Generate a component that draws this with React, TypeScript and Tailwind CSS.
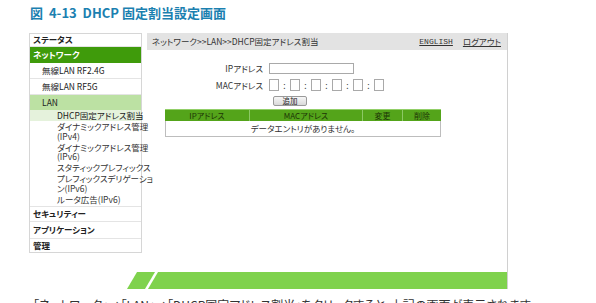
const subItems = [
  ["ダイナミックアドレス管理", "(IPv4)"],
  ["ダイナミックアドレス管理", "(IPv6)"],
  ["スタティックプレフィックス"],
  ["プレフィックスデリゲーショ", "ン(IPv6)"],
  ["ルータ広告(IPv6)"],
];

function Sidebar() {
  return (
    <div className="w-[113px] h-[220px] shrink-0 flex flex-col border border-[#d6d6d6] text-[8.5px] leading-[9.5px] text-[#222]">
      <div className="h-[13px] flex items-center pl-[3px] font-bold border-b border-[#e4e4e4]">ステータス</div>
      <div className="h-[16px] flex items-center pl-[3px] font-bold bg-[#3f9b0b] text-white">ネットワーク</div>
      <div className="h-[16px] flex items-center pl-[12px] border-b border-[#e4e4e4]">無線LAN RF2.4G</div>
      <div className="h-[16px] flex items-center pl-[12px] border-b border-[#e4e4e4]">無線LAN RF5G</div>
      <div className="h-[15px] flex items-center pl-[12px] bg-[#bce1a3]">LAN</div>
      <div className="h-[11px] flex items-center pl-[27px] bg-[#e5f2dc] whitespace-nowrap">DHCP固定アドレス割当</div>
      <div className="flex flex-col gap-[1.5px] pt-[1px] pb-[2px] border-b border-[#e4e4e4]">
        {subItems.map((lines, i) => (
          <div key={i} className="pl-[27px] whitespace-nowrap text-[#333]">
            {lines.map((l) => (
              <div key={l}>{l}</div>
            ))}
          </div>
        ))}
      </div>
      <div className="h-[15px] flex items-center pl-[3px] font-bold border-b border-[#e4e4e4]">セキュリティー</div>
      <div className="h-[17px] flex items-center pl-[3px] font-bold border-b border-[#e4e4e4]">アプリケーション</div>
      <div className="flex-1 flex items-center pl-[3px] font-bold">管理</div>
    </div>
  );
}

function Content() {
  return (
    <div className="w-[360px] h-[239px] text-[8.5px] text-[#333]">
      <div className="h-[17px] bg-[#e3e3e3] flex items-center justify-between pl-[5px] pr-[6px]">
        <span>ネットワーク&gt;&gt;LAN&gt;&gt;DHCP固定アドレス割当</span>
        <div className="flex items-center gap-[10px]">
          <span className="underline font-['Liberation_Mono',monospace] text-[8px]">ENGLISH</span>
          <span className="underline">ログアウト</span>
        </div>
      </div>

      <div className="mt-[13px] flex flex-col gap-[5px]">
        <div className="flex items-center h-[11px]">
          <span className="w-[116px] text-right">IPアドレス</span>
          <span className="ml-[6px] w-[85px] h-[11px] border border-[#a9a9a9] bg-white" />
        </div>
        <div className="flex items-center h-[12px]">
          <span className="w-[116px] text-right">MACアドレス</span>
          <div className="ml-[6px] flex items-center">
            {[0, 1, 2, 3, 4, 5].map((i) => (
              <div key={i} className="flex items-center">
                {i > 0 && <span className="w-[11px] text-center">:</span>}
                <span className="w-[10px] h-[12px] border border-[#a9a9a9] bg-white" />
              </div>
            ))}
          </div>
        </div>
        <div className="h-[10px] flex">
          <button className="ml-[126px] w-[34px] h-[10px] flex items-center justify-center rounded-[2px] border border-[#9a9a9a] bg-gradient-to-b from-[#f7f7f7] to-[#d9d9d9] text-[7.5px] leading-none text-[#222]">
            追加
          </button>
        </div>
      </div>

      <div className="ml-[18px] mt-[3px] w-[276px] text-[8px]">
        <div className="flex h-[12px] bg-[#54a41a] border-t border-[#92cf68] text-[#1d3406]">
          <div className="w-[84px] flex items-center justify-center">IPアドレス</div>
          <div className="w-[113px] flex items-center justify-center border-l border-[#8cc865]">MACアドレス</div>
          <div className="w-[40px] flex items-center justify-center border-l border-[#8cc865]">変更</div>
          <div className="flex-1 flex items-center justify-center border-l border-[#8cc865]">削除</div>
        </div>
        <div className="h-[16px] flex items-center justify-center border border-t-0 border-[#bdbdbd] text-[8.5px]">
          データエントリがありません。
        </div>
      </div>
    </div>
  );
}

export default function App() {
  return (
    <div className="w-[596px] h-[303px] overflow-hidden bg-white font-['Noto_Sans_CJK_JP','Noto_Sans_CJK_SC',sans-serif] [font-feature-settings:'palt']">
      <h1 className="h-[33px] pl-[30px] pt-[5px] text-[13px] leading-[16px] font-bold text-[#1b80b0] whitespace-pre [font-feature-settings:normal]">
        {"図  4-13  DHCP 固定割当設定画面"}
      </h1>

      <div className="ml-[29px] w-[479px] border-r border-[#d0d0d0] flex flex-col">
        <div className="flex items-start gap-[5px]">
          <Sidebar />
          <Content />
        </div>
        <div className="h-[17px] pl-[98px]">
          <svg width="380" height="17" viewBox="0 0 380 17" className="block">
            <polygon points="10,0 28,0 18,17 0,17" fill="#7fd24d" />
            <polygon points="31,0 380,0 380,17 21,17" fill="#7fd24d" />
          </svg>
        </div>
      </div>

      <p className="mt-[8px] pl-[33px] text-[12px] leading-[16px] text-[#333] whitespace-nowrap">
        「ネットワーク」→「LAN」→「DHCP固定アドレス割当」をクリックすると、上記の画面が表示されます。
      </p>
    </div>
  );
}
